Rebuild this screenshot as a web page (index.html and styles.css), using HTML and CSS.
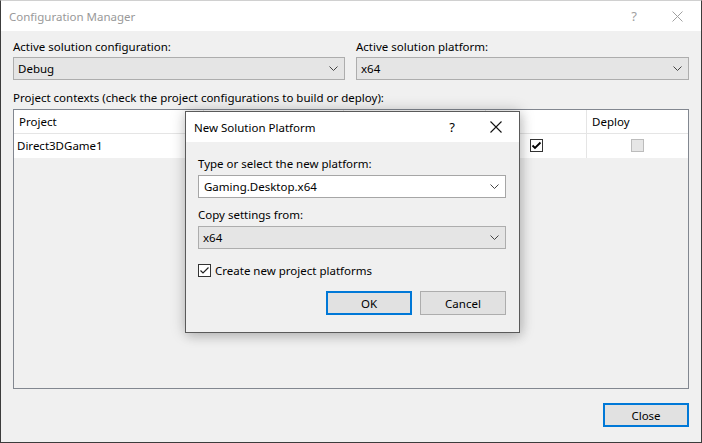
FILE: index.html
```html
<!DOCTYPE html>
<html>
<head>
<meta charset="utf-8">
<link rel="stylesheet" href="styles.css">
</head>
<body>
<div class="window">
  <div class="titlebar">
    <span class="title">Configuration Manager</span>
    <span class="tb-help">?</span>
    <span class="tb-close"><svg width="11" height="11" viewBox="0 0 11 11"><path d="M0.5 0.5L10.5 10.5M10.5 0.5L0.5 10.5" stroke="#a0a0a0" stroke-width="1" fill="none"/></svg></span>
  </div>
  <div class="content">
    <div class="top-row">
      <div class="field">
        <div class="label">Active solution configuration:</div>
        <div class="combo"><span>Debug</span><svg class="chev" width="9" height="5" viewBox="0 0 9 5"><path d="M0.5 0.5L4.5 4.5L8.5 0.5" stroke="#444" fill="none"/></svg></div>
      </div>
      <div class="field">
        <div class="label">Active solution platform:</div>
        <div class="combo"><span>x64</span><svg class="chev" width="9" height="5" viewBox="0 0 9 5"><path d="M0.5 0.5L4.5 4.5L8.5 0.5" stroke="#444" fill="none"/></svg></div>
      </div>
    </div>
    <div class="label ctx">Project contexts (check the project configurations to build or deploy):</div>
    <div class="grid">
      <div class="grow head">
        <div class="c c-proj">Project</div>
        <div class="c c-conf"></div>
        <div class="c c-plat"></div>
        <div class="c c-build"></div>
        <div class="c c-dep">Deploy</div>
      </div>
      <div class="grow data">
        <div class="c c-proj">Direct3DGame1</div>
        <div class="c c-conf"></div>
        <div class="c c-plat"></div>
        <div class="c c-build center"><span class="cb checked"><svg width="11" height="11" viewBox="0 0 11 11"><path d="M1.5 5.5L4 8L9.5 2.5" stroke="#000" stroke-width="1.8" fill="none"/></svg></span></div>
        <div class="c c-dep center"><span class="cb disabled"></span></div>
      </div>
    </div>
    <div class="footer">
      <button class="btn default close-btn">Close</button>
    </div>
  </div>

  <div class="dialog">
    <div class="d-title">
      <span class="title">New Solution Platform</span>
      <span class="d-help">?</span>
      <span class="d-close"><svg width="12" height="12" viewBox="0 0 12 12"><path d="M0.5 0.5L11.5 11.5M11.5 0.5L0.5 11.5" stroke="#111" stroke-width="1.1" fill="none"/></svg></span>
    </div>
    <div class="d-body">
      <div class="label">Type or select the new platform:</div>
      <div class="combo edit"><span>Gaming.Desktop.x64</span><svg class="chev" width="9" height="5" viewBox="0 0 9 5"><path d="M0.5 0.5L4.5 4.5L8.5 0.5" stroke="#444" fill="none"/></svg></div>
      <div class="label copy">Copy settings from:</div>
      <div class="combo"><span>x64</span><svg class="chev" width="9" height="5" viewBox="0 0 9 5"><path d="M0.5 0.5L4.5 4.5L8.5 0.5" stroke="#444" fill="none"/></svg></div>
      <label class="check-row"><span class="cb plain"><svg width="11" height="11" viewBox="0 0 11 11"><path d="M1.5 5.5L4 8L9.5 2.5" stroke="#222" stroke-width="1.2" fill="none"/></svg></span><span>Create new project platforms</span></label>
      <div class="d-buttons">
        <button class="btn default">OK</button>
        <button class="btn">Cancel</button>
      </div>
    </div>
  </div>
</div>
</body>
</html>
```

FILE: styles.css
```css
* { box-sizing: border-box; }
html, body { margin: 0; padding: 0; }
body {
  font-family: "Segoe UI", "Noto Sans", "Liberation Sans", sans-serif;
  font-size: 11.5px;
  color: #000;
  background: #f0f0f0;
}
.window {
  position: relative;
  width: 702px;
  height: 443px;
  border: 1px solid #3c3c3c;
  border-top-color: #d0d0d0;
  background: #f0f0f0;
  display: flex;
  flex-direction: column;
  overflow: hidden;
}
.titlebar {
  height: 30px;
  background: #fff;
  display: flex;
  align-items: center;
  padding-left: 8px;
  flex: none;
}
.titlebar .title { color: #999; flex: 1; }
.tb-help { color: #a0a0a0; width: 16px; text-align: center; margin-right: 30px; font-size: 13px; }
.tb-close { width: 11px; height: 11px; margin-right: 18px; display: flex; }
.content {
  flex: 1;
  display: flex;
  flex-direction: column;
  padding: 0 12px 15px 12px;
}
.label { line-height: 16px; height: 16px; white-space: nowrap; }
.top-row {
  display: grid;
  grid-template-columns: 332px 333px;
  column-gap: 11px;
  margin-top: 8px;
}
.field .label { margin-bottom: 2px; }
.combo {
  height: 23px;
  background: #e5e5e5;
  border: 1px solid #adadad;
  display: flex;
  align-items: center;
  padding: 0 6px 0 4px;
}
.combo span { flex: 1; }
.combo .chev { flex: none; }
.combo.edit { background: #fff; border-color: #a6a6a6; padding-left: 5px; }
.ctx { margin-top: 10px; margin-bottom: 3px; }
.grid {
  flex: 1;
  border: 1px solid #828790;
  background: #f0f0f0;
}
.grow { display: flex; height: 24px; background: #fff; }
.grow.head { border-bottom: 1px solid #e5e5e5; }
.grow .c {
  display: flex;
  align-items: center;
  padding-left: 5px;
  padding-bottom: 1px;
  border-right: 1px solid #e5e5e5;
  white-space: nowrap;
  overflow: hidden;
}
.grow.data { height: 24px; }
.grow.data .c { padding-left: 3px; padding-bottom: 2px; }
.c-proj { width: 190px; }
.c-conf { width: 140px; }
.c-plat { width: 142px; }
.c-build { width: 101px; }
.c-dep { flex: 1; border-right: none !important; }
.grow .center { justify-content: center; padding-left: 0 !important; }
.cb {
  width: 13px;
  height: 13px;
  border: 1px solid #333;
  background: #fff;
  display: flex;
  align-items: center;
  justify-content: center;
}
.cb.disabled { background: #e6e6e6; border-color: #bcbcbc; }
.cb.plain { border-color: #333; }
.footer {
  display: flex;
  justify-content: flex-end;
  margin-top: 14px;
}
.btn {
  font: inherit;
  color: #000;
  height: 24px;
  width: 86px;
  background: #e1e1e1;
  border: 1px solid #adadad;
  padding: 0;
}
.btn.default { border: 2px solid #0078d7; }
.close-btn { margin-right: 0; }

.dialog {
  position: absolute;
  left: 184px;
  top: 110px;
  width: 335px;
  height: 222px;
  border: 1px solid #5a5a5a;
  background: #f0f0f0;
  box-shadow: 0 0 14px rgba(0,0,0,0.22), 2px 4px 10px rgba(0,0,0,0.12);
  display: flex;
  flex-direction: column;
}
.d-title {
  height: 30px;
  background: #fff;
  display: flex;
  align-items: center;
  padding-left: 8px;
  flex: none;
}
.d-title .title { flex: 1; }
.d-help { width: 12px; text-align: center; margin-right: 32px; font-size: 13px; }
.d-close { width: 12px; height: 12px; display: flex; margin-right: 17px; }
.d-body {
  padding: 14px 12px 0 12px;
  display: flex;
  flex-direction: column;
}
.d-body .label { margin-bottom: 3px; }
.d-body .combo { width: 308px; }
.d-body .copy { margin-top: 9px; }
.check-row {
  display: flex;
  align-items: center;
  gap: 4px;
  margin-top: 15px;
  height: 13px;
}
.d-buttons {
  display: flex;
  justify-content: flex-end;
  gap: 8px;
  margin-top: 14px;
  width: 308px;
}
```
